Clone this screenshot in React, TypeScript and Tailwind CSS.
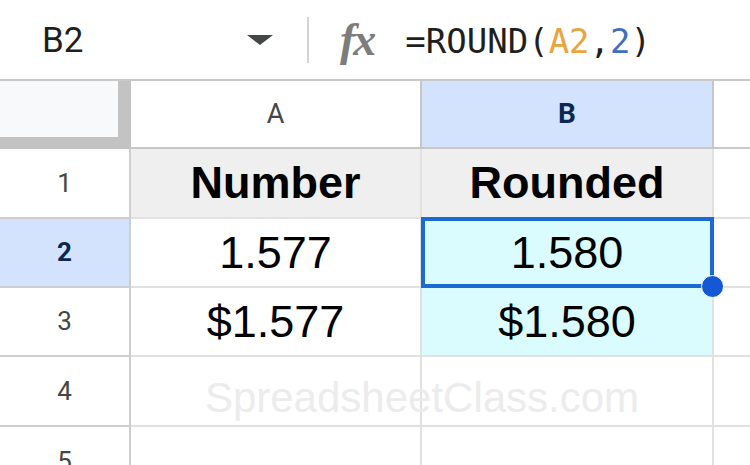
import React from "react";

const roboto = { fontFamily: "Roboto, 'Noto Sans', sans-serif" };
const arial = { fontFamily: "'Liberation Sans', Arial, sans-serif" };

function RowHead({ n, h, active }: { n: number; h: string; active?: boolean }) {
  return (
    <div
      className={`${h} w-[131px] shrink-0 flex items-center justify-center border-r-2 border-b-2 border-[#cfcfcf] text-[26px] ${
        active ? "bg-[#d3e3fd] text-[#0b2754] font-bold" : "bg-white text-[#444746]"
      }`}
      style={roboto}
    >
      {n}
    </div>
  );
}

function Cell({
  w,
  bg,
  children,
  bold,
  extra,
}: {
  w: string;
  bg?: string;
  children?: React.ReactNode;
  bold?: boolean;
  extra?: React.ReactNode;
}) {
  return (
    <div
      className={`relative ${w} shrink-0 h-full flex items-center justify-center border-r-2 border-b-2 border-[#e1e1e1] text-[45px] text-black ${
        bg ?? "bg-white"
      } ${bold ? "font-bold" : ""}`}
      style={arial}
    >
      {children}
      {extra}
    </div>
  );
}

export default function App() {
  return (
    <div className="relative w-[750px] h-[465px] overflow-hidden bg-white">
      {/* Formula bar */}
      <div className="h-[81px] flex items-center border-b-2 border-[#c9c9c9]">
        <div className="w-[230px] pl-[42px] pt-[4px] text-[35px] text-[#1f1f1f]" style={roboto}>
          B2
        </div>
        <svg width="26" height="12" viewBox="0 0 26 12" className="ml-[17px]">
          <polygon points="0,1 26,1 13,11" fill="#444746" />
        </svg>
        <div className="ml-[34px] w-[2px] h-[46px] bg-[#d3d3d3]" />
        <div
          className="ml-[31px] text-[46px] italic font-bold text-[#7c7c7c] leading-none tracking-[-2px]"
          style={{ fontFamily: "'Liberation Serif', 'DejaVu Serif', serif" }}
        >
          fx
        </div>
        <div
          className="ml-[31px] pt-[3px] text-[34px] text-[#1f1f1f] whitespace-pre"
          style={{ fontFamily: "'DejaVu Sans Mono', monospace" }}
        >
          =ROUND(<span className="text-[#e9a43b]">A2</span>,<span className="text-[#3e6fc0]">2</span>)
        </div>
      </div>

      {/* Column header row */}
      <div className="flex h-[68px]">
        <div className="w-[131px] shrink-0 h-full bg-[#f8f9fa] border-r-[13px] border-b-[12px] border-[#c3c3c3]" />
        <div
          className="w-[291px] shrink-0 h-full flex items-center justify-center border-r-2 border-b-2 border-[#c7c7c7] text-[27px] text-[#444746]"
          style={roboto}
        >
          A
        </div>
        <div
          className="w-[292px] shrink-0 h-full flex items-center justify-center border-r-2 border-b-2 border-[#c7c7c7] bg-[#d3e3fd] text-[28px] font-bold text-[#0b2754]"
          style={roboto}
        >
          B
        </div>
        <div className="flex-1 h-full border-b-2 border-[#c7c7c7]" />
      </div>

      {/* Row 1 */}
      <div className="flex h-[70px]">
        <RowHead n={1} h="h-full" />
        <Cell w="w-[291px]" bg="bg-[#efefef]" bold>
          Number
        </Cell>
        <Cell w="w-[292px]" bg="bg-[#efefef]" bold>
          Rounded
        </Cell>
        <div className="flex-1 h-full border-b-2 border-[#e1e1e1]" />
      </div>

      {/* Row 2 */}
      <div className="flex h-[69px]">
        <RowHead n={2} h="h-full" active />
        <Cell w="w-[291px]">1.577</Cell>
        <Cell
          w="w-[292px]"
          bg="bg-[#dbfcff]"
          extra={
            <>
              <div className="absolute -top-[2px] -left-[1px] -right-[2px] -bottom-[2px] border-[4px] border-[#1b6ad4] pointer-events-none" />
              <div className="absolute -right-[12px] -bottom-[12px] w-[23px] h-[23px] rounded-full bg-[#1558d6] border border-white z-10" />
            </>
          }
        >
          1.580
        </Cell>
        <div className="flex-1 h-full border-b-2 border-[#e1e1e1]" />
      </div>

      {/* Row 3 */}
      <div className="flex h-[69px]">
        <RowHead n={3} h="h-full" />
        <Cell w="w-[291px]">$1.577</Cell>
        <Cell w="w-[292px]" bg="bg-[#dbfcff]">
          $1.580
        </Cell>
        <div className="flex-1 h-full border-b-2 border-[#e1e1e1]" />
      </div>

      {/* Row 4 */}
      <div className="flex h-[70px]">
        <RowHead n={4} h="h-full" />
        <Cell w="w-[291px]" />
        <Cell w="w-[292px]" />
        <div className="flex-1 h-full border-b-2 border-[#e1e1e1]" />
      </div>

      {/* Row 5 */}
      <div className="flex h-[70px]">
        <RowHead n={5} h="h-full" />
        <Cell w="w-[291px]" />
        <Cell w="w-[292px]" />
        <div className="flex-1 h-full border-b-2 border-[#e1e1e1]" />
      </div>

      {/* Watermark */}
      <div
        className="absolute left-[122px] top-[377px] w-[600px] text-center text-[42px] leading-none text-[#ececec] pointer-events-none"
        style={arial}
      >
        SpreadsheetClass.com
      </div>
    </div>
  );
}
